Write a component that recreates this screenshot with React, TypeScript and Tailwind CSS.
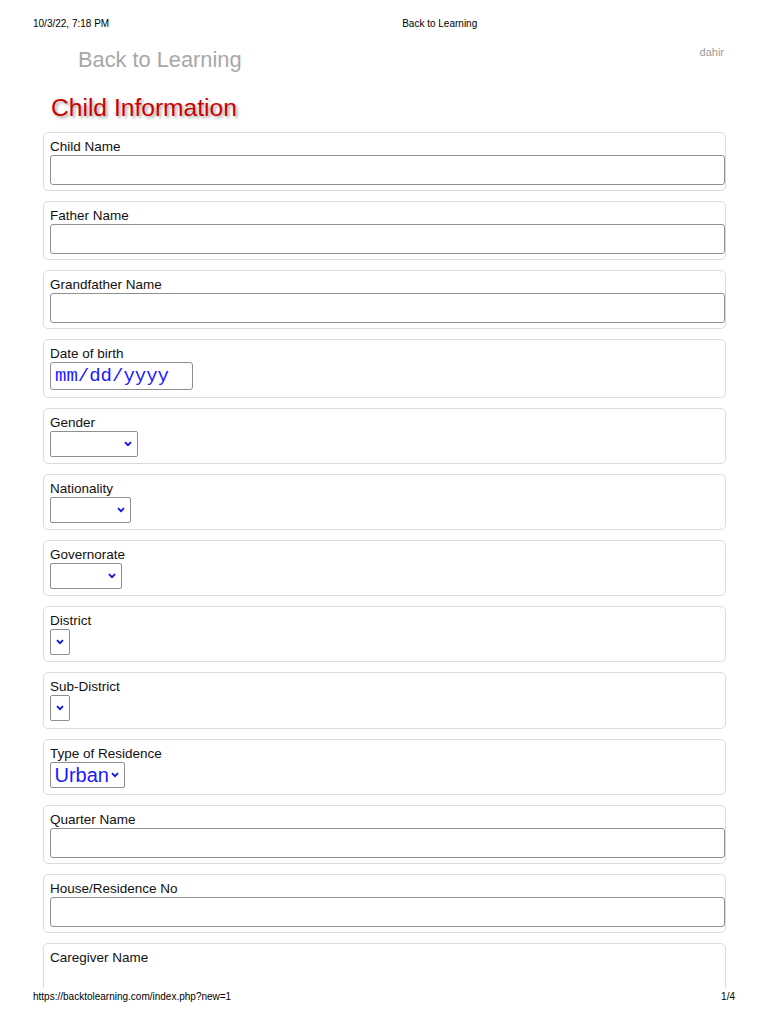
import { ReactNode } from 'react';

type Field =
  | { kind: 'text'; label: string; spaced?: boolean }
  | { kind: 'date'; label: string }
  | { kind: 'select'; label: string; width: number; value?: string; roomy?: boolean };

const fields: Field[] = [
  { kind: 'text', label: 'Child Name' },
  { kind: 'text', label: 'Father Name' },
  { kind: 'text', label: 'Grandfather Name' },
  { kind: 'date', label: 'Date of birth' },
  { kind: 'select', label: 'Gender', width: 88 },
  { kind: 'select', label: 'Nationality', width: 81 },
  { kind: 'select', label: 'Governorate', width: 72 },
  { kind: 'select', label: 'District', width: 20 },
  { kind: 'select', label: 'Sub-District', width: 20, roomy: true },
  { kind: 'select', label: 'Type of Residence', width: 75, value: 'Urban' },
  { kind: 'text', label: 'Quarter Name' },
  { kind: 'text', label: 'House/Residence No' },
  { kind: 'text', label: 'Caregiver Name', spaced: true },
];

function Chevron() {
  return (
    <svg width="8" height="6" viewBox="0 0 8 6" className="shrink-0">
      <path d="M1 1.2 L4 4.2 L7 1.2" fill="none" stroke="#1010ee" strokeWidth="1.8" />
    </svg>
  );
}

function Card({ label, children, pb }: { label: string; children: ReactNode; pb: string }) {
  return (
    <div className={`border border-[#dcdcdc] rounded-[5px] pl-[6px] pt-[5px] ${pb}`}>
      <div className="text-[13.5px] leading-[17px] text-[#111]">{label}</div>
      {children}
    </div>
  );
}

function Control({ field }: { field: Field }) {
  if (field.kind === 'text') {
    return (
      <div
        className={`h-[30px] w-full border border-[#8f8f8f] rounded-[3px] bg-white ${field.spaced ? 'mt-[30px]' : ''}`}
      />
    );
  }
  if (field.kind === 'date') {
    return (
      <div className="h-[28px] w-[143px] border border-[#8f8f8f] rounded-[3px] flex items-center pl-[4px]">
        <span className="font-['Liberation_Mono',monospace] text-[19px] leading-none text-[#1a1aff]">
          mm/dd/yyyy
        </span>
      </div>
    );
  }
  return (
    <div
      className="h-[26px] border border-[#8f8f8f] rounded-[2px] flex items-center justify-end pr-[5px] gap-[2px]"
      style={{ width: field.width }}
    >
      {field.value && (
        <span className="text-[20px] leading-none text-[#1a1aff] mr-auto pl-[4px]">{field.value}</span>
      )}
      <Chevron />
    </div>
  );
}

const bottomPad = (f: Field) => {
  if (f.kind === 'date') return 'pb-[7px]';
  if (f.kind === 'select') return f.roomy ? 'pb-[7px]' : 'pb-[6px]';
  return 'pb-[5px]';
};

export default function App() {
  return (
    <div className="w-[768px] h-[1024px] bg-white flex flex-col overflow-hidden font-['Liberation_Sans',Arial,sans-serif]">
      {/* print header */}
      <div className="pt-[18px] px-[33px] h-[30px] flex text-[10px] leading-[12px] text-black">
        <span>10/3/22, 7:18 PM</span>
        <span className="ml-[293px]">Back to Learning</span>
      </div>

      <div className="h-[958px] overflow-hidden">
        <div className="mt-[17px] flex items-start pl-[78px] pr-[44px]">
          <span className="text-[21.8px] leading-[26px] text-[#a8a8a8]">Back to Learning</span>
          <span className="ml-auto text-[11px] leading-[12px] text-[#9a9a9a] -mt-[1px]">dahir</span>
        </div>

        <h1
          className="mt-[20px] ml-[51px] text-[24.6px] leading-[30px] text-[#cc0000]"
          style={{ textShadow: '2px 2px 3px rgba(0,0,0,0.35)' }}
        >
          Child Information
        </h1>

        <div className="mt-[9px] ml-[43px] w-[683px] flex flex-col gap-[10px]">
          {fields.map((f) => (
            <Card key={f.label} label={f.label} pb={bottomPad(f)}>
              <Control field={f} />
            </Card>
          ))}
        </div>
      </div>

      {/* print footer */}
      <div className="pt-[3px] px-[33px] flex text-[10px] leading-[12px] text-black">
        <span>https://backtolearning.com/index.php?new=1</span>
        <span className="ml-auto">1/4</span>
      </div>
    </div>
  );
}
